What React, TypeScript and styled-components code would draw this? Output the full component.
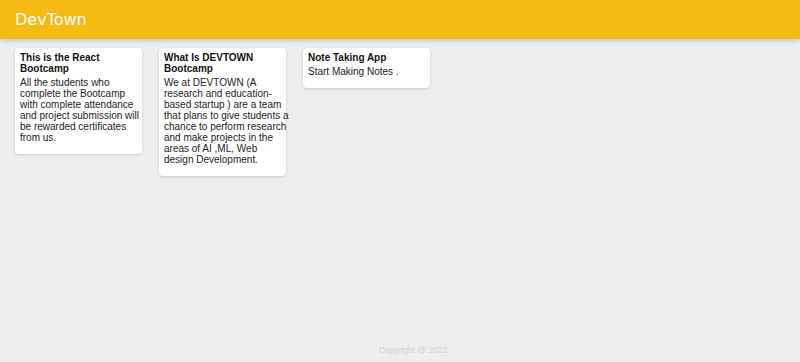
import styled, { createGlobalStyle } from 'styled-components';

const GlobalStyle = createGlobalStyle`
    html, body {
        margin: 0;
        padding: 0;
        background: #eeeeee;
        font-family: 'Liberation Sans', Arial, sans-serif;
    }
    * {
        box-sizing: border-box;
    }
`;

const Page = styled.div`
    min-height: 100vh;
    display: flex;
    flex-direction: column;
`;

const Header = styled.header`
    height: 39px;
    background-color: #f5ba13;
    display: flex;
    align-items: center;
    padding: 0 15px;
    box-shadow: 0 0 6px 0 rgba(0, 0, 0, 0.3);
`;

const Logo = styled.h1`
    margin: 0;
    color: #ffffff;
    font-family: 'Comic Sans MS', 'DejaVu Sans', cursive;
    font-weight: 400;
    font-size: 16px;
`;

const NoteList = styled.main`
    display: flex;
    flex-wrap: wrap;
    align-items: flex-start;
    gap: 17px;
    padding: 9px 15px;
`;

const Note = styled.div`
    width: 127px;
    padding: 4px 0 5px 5px;
    background: #ffffff;
    border-radius: 4px;
    box-shadow: 0 1px 3px #c8c8c8;
`;

const NoteTitle = styled.h2`
    margin: 0 0 3px;
    padding-right: 2px;
    font-size: 10px;
    line-height: 11px;
    font-weight: 700;
    color: #111111;
`;

/* the text runs a hair past the card edge, as in the original */
const NoteBody = styled.p`
    width: 125.3px;
    margin: 0 0 6px;
    font-size: 10px;
    line-height: 11px;
    color: #222222;
    white-space: pre-wrap;
    word-wrap: break-word;
`;

const Footer = styled.footer`
    margin-top: auto;
    height: 17px;
    padding-left: 26px;
    text-align: center;
`;

const FooterText = styled.p`
    margin: 0;
    color: #d2d2d2;
    font-size: 8.5px;
`;

const notes = [
    {
        id: 1,
        title: 'This is the React Bootcamp',
        content:
            'All the students who complete the Bootcamp with complete attendance and project submission will be rewarded certificates from us.',
    },
    {
        id: 2,
        title: 'What Is DEVTOWN Bootcamp',
        content:
            'We at DEVTOWN (A research and education-based startup ) are a team that plans to give students a chance to perform research and make projects in the areas of AI ,ML, Web design Development.',
    },
    {
        id: 3,
        title: 'Note Taking App',
        content: 'Start Making Notes .',
    },
];

function App() {
    return (
        <>
            <GlobalStyle />
            <Page>
                <Header>
                    <Logo>DevTown</Logo>
                </Header>
                <NoteList>
                    {notes.map((note) => (
                        <Note key={note.id}>
                            <NoteTitle>{note.title}</NoteTitle>
                            <NoteBody>{note.content}</NoteBody>
                        </Note>
                    ))}
                </NoteList>
                <Footer>
                    <FooterText>Copyright @ 2022</FooterText>
                </Footer>
            </Page>
        </>
    );
}

export default App;
